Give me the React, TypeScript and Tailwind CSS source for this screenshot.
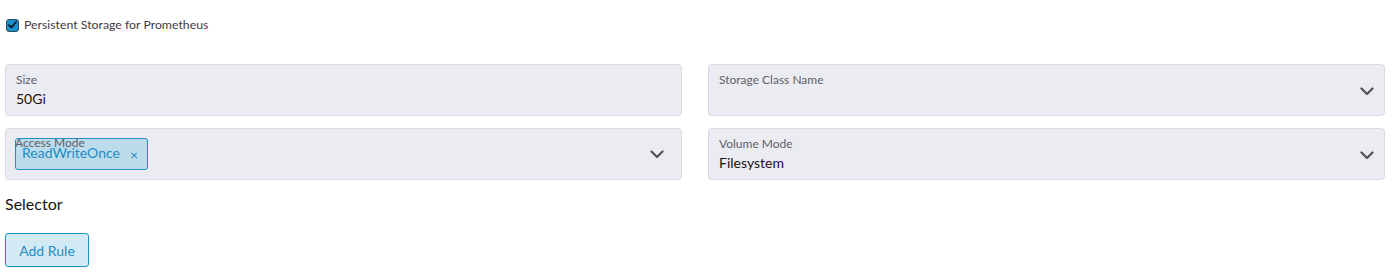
import React from "react";

const Chevron = () => (
  <svg width="14" height="9" viewBox="0 0 14 9" fill="none">
    <path d="M1.5 1.5 L7 7 L12.5 1.5" stroke="#505058" strokeWidth="2.2" strokeLinecap="round" strokeLinejoin="round" />
  </svg>
);

export default function App() {
  return (
    <div className="w-[1394px] h-[276px] bg-white pl-[5px] pr-[9px] pt-[17px]" style={{ fontFamily: "Lato, 'Noto Sans', sans-serif" }}>
      <div className="flex items-center h-[16px]">
        <div className="w-[13px] h-[13px] ml-[1px] rounded-[3px] bg-[#1b8fca] border border-[#2a4a60] flex items-center justify-center">
          <svg width="9" height="8" viewBox="0 0 9 8" fill="none">
            <path d="M1 4.2 L3.4 6.4 L8 1.2" stroke="#0b0b10" strokeWidth="1.6" strokeLinecap="round" strokeLinejoin="round" />
          </svg>
        </div>
        <span className="ml-[5px] text-[12.3px] text-[#3d3d47]">Persistent Storage for Prometheus</span>
      </div>

      <div className="grid grid-cols-2 gap-x-[26px] gap-y-[12px] mt-[31px]">
        <div className="h-[52px] rounded-[4px] border border-[#d8dae3] bg-[#ebecf1] px-[10px] pt-[7px]">
          <div className="text-[12px] leading-[16px] text-[#5e5e68]">Size</div>
          <div className="text-[14px] leading-[20px] text-[#141419] mt-[1px]">50Gi</div>
        </div>
        <div className="h-[52px] rounded-[4px] border border-[#d8dae3] bg-[#ebecf1] pl-[10px] pr-[10px] pt-[7px] flex justify-between">
          <div className="text-[12px] leading-[16px] text-[#5e5e68]">Storage Class Name</div>
          <div className="self-center mt-[-4px]"><Chevron /></div>
        </div>
        <div className="relative h-[52px] rounded-[4px] border border-[#d8dae3] bg-[#ebecf1] pl-[9px] pr-[17px] flex justify-between items-center">
          <div className="h-[32px] w-[133px] rounded-[3px] border border-[#2192c8] bg-[#bcdcec] flex items-center pl-[6px] pr-[9px] justify-between">
            <span className="text-[14px] leading-[18px] text-[#1f8dc4] mt-[-2px]">ReadWriteOnce</span>
            <span className="text-[14px] leading-[18px] text-[#1f8dc4] mt-[1px]">×</span>
          </div>
          <div className="absolute left-[9px] top-[6px] text-[12px] leading-[16px] text-[#5e5e68]">Access Mode</div>
          <Chevron />
        </div>
        <div className="h-[52px] rounded-[4px] border border-[#d8dae3] bg-[#ebecf1] pl-[10px] pr-[10px] pt-[7px] flex justify-between">
          <div>
            <div className="text-[12px] leading-[16px] text-[#5e5e68]">Volume Mode</div>
            <div className="text-[14px] leading-[20px] text-[#141419] mt-[1px]">Filesystem</div>
          </div>
          <div className="self-center mt-[-4px]"><Chevron /></div>
        </div>
      </div>

      <div className="mt-[14px] text-[16px] leading-[20px] text-[#141419]">Selector</div>
      <button className="mt-[19px] h-[34px] w-[84px] rounded-[3px] border border-[#2192c8] bg-[#d3eaf5] text-[14px] text-[#1f8dc4]">Add Rule</button>
    </div>
  );
}
